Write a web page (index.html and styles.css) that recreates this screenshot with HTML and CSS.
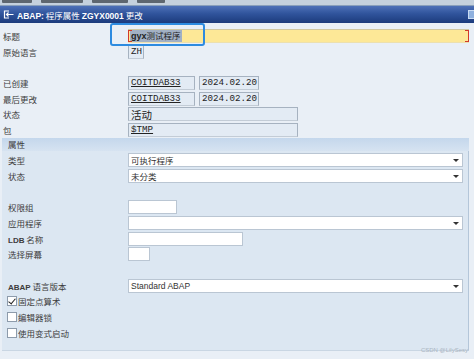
FILE: index.html
```html
<!DOCTYPE html>
<html lang="zh">
<head>
    <meta charset="UTF-8">
    <title>ABAP: 程序属性 ZGYX0001 更改</title>
    <link rel="stylesheet" href="styles.css">
</head>
<body>
<div class="topstrip">
    <i class="blob w1"></i><i class="blob w2"></i><i class="blob w3"></i><i class="blob w4"></i>
</div>
<div class="titlebar">
    <svg class="tb-icon" width="11" height="9" viewBox="0 0 11 9">
        <path d="M6 1H1.5V8H6" fill="none" stroke="#fff" stroke-width="1.2"/>
        <path d="M10.5 4.5H3.5M5.5 2.5L3.5 4.5L5.5 6.5" fill="none" stroke="#fff" stroke-width="1.2"/>
    </svg>
    <span class="tb-text"><b>ABAP:</b> 程序属性 <b>ZGYX0001</b> 更改</span>
    <i class="tb-btn"></i>
</div>

<div class="form">
    <div class="row">
        <span class="label">标题</span>
        <span class="field yellow"><em class="sel"><b>gyx</b>测试程序</em></span>
    </div>
    <div class="row">
        <span class="label">原始语言</span>
        <span class="field ro w15">ZH</span>
    </div>
    <div class="row"></div>
    <div class="row">
        <span class="label">已创建</span>
        <span class="field ro w67 link">COITDAB33</span>
        <span class="field ro w60 gap">2024.02.20</span>
    </div>
    <div class="row">
        <span class="label">最后更改</span>
        <span class="field ro w67 link">COITDAB33</span>
        <span class="field ro w60 gap">2024.02.20</span>
    </div>
    <div class="row">
        <span class="label">状态</span>
        <span class="field ro w170 cjk">活动</span>
    </div>
    <div class="row">
        <span class="label">包</span>
        <span class="field ro w170 link">$TMP</span>
    </div>

    <div class="group">
        <div class="group-head">属性</div>
        <div class="group-body">
            <div class="row">
                <span class="label">类型</span>
                <span class="field dd">可执行程序</span>
            </div>
            <div class="row">
                <span class="label">状态</span>
                <span class="field dd">未分类</span>
            </div>
            <div class="row"></div>
            <div class="row">
                <span class="label">权限组</span>
                <span class="field inp w49"></span>
            </div>
            <div class="row">
                <span class="label">应用程序</span>
                <span class="field dd"></span>
            </div>
            <div class="row">
                <span class="label"><b>LDB</b> 名称</span>
                <span class="field inp w115"></span>
            </div>
            <div class="row">
                <span class="label">选择屏幕</span>
                <span class="field inp w21"></span>
            </div>
            <div class="row"></div>
            <div class="row">
                <span class="label"><b>ABAP</b> 语言版本</span>
                <span class="field dd latin">Standard ABAP</span>
            </div>
            <div class="row check">
                <span class="box on"></span><span class="ctext">固定点算术</span>
            </div>
            <div class="row check">
                <span class="box"></span><span class="ctext">编辑器锁</span>
            </div>
            <div class="row check">
                <span class="box"></span><span class="ctext">使用变式启动</span>
            </div>
        </div>
    </div>
</div>

<div class="focus"></div>
<div class="mark">CSDN @LilySesy</div>
</body>
</html>
```

FILE: styles.css
```css
*{
    margin: 0;
    padding: 0;
    box-sizing: border-box;
}
body{
    width: 474px;
    height: 359px;
    overflow: hidden;
    position: relative;
    background: #e9eff6;
    color: #3c3c3c;
    font-family: "Noto Sans CJK SC", "Liberation Sans", sans-serif;
}
b{
    font-family: "Liberation Sans", sans-serif;
    font-weight: bold;
}

/* top menu strip, mostly cut off: only the bottoms of the words show */
.topstrip{
    height: 6px;
    display: flex;
    align-items: flex-start;
    gap: 9px;
    padding-left: 2px;
    background: #c5d1dd;
    border-bottom: 1px solid #8aa0bb;
}
.blob{
    height: 3px;
    background: #5e6770;
    border-radius: 0 0 1px 1px;
}
.blob.w1{ width: 30px; }
.blob.w2{ width: 42px; }
.blob.w3{ width: 36px; }
.blob.w4{ width: 28px; }

.titlebar{
    height: 17px;
    display: flex;
    align-items: center;
    padding-left: 3px;
    color: #fff;
    background: linear-gradient(#4e71b7, #30549c 45%, #1c3b7c);
}
.tb-icon{
    margin-right: 3px;
}
.tb-text{
    font-size: 8.5px;
    white-space: nowrap;
}
.tb-text b{
    font-size: 8.5px;
}
.tb-btn{
    margin-left: auto;
    width: 6px;
    height: 9px;
    background: #8fb1df;
    border: 1px solid #c9dbf2;
    border-right: none;
}

.form{
    padding-top: 5px;
}
.row{
    height: 15.7px;
    display: flex;
    align-items: center;
    padding-left: 3px;
}
.label{
    width: 125px;
    flex: none;
    font-size: 8.5px;
    white-space: nowrap;
}
.label b{
    font-size: 8px;
}

.field{
    height: 14px;
    flex: none;
    display: flex;
    align-items: center;
    padding-left: 2px;
    white-space: nowrap;
    overflow: hidden;
}
.ro{
    background: #e3ebf4;
    border: 1px solid #a6b2c0;
    border-bottom-color: #c3ccd6;
    font-family: "Liberation Mono", "Noto Sans CJK SC", monospace;
    font-size: 9.2px;
    color: #222;
}
.ro.cjk{
    font-family: "Noto Sans CJK SC", sans-serif;
    font-size: 10.5px;
}
.link{
    text-decoration: underline;
}
.gap{
    margin-left: 4px;
}
.w15{ width: 16px; }
.w67{ width: 67px; }
.w60{ width: 60px; }
.w170{ width: 170px; }
.w49{ width: 49px; }
.w115{ width: 115px; }
.w21{ width: 22px; }

.yellow{
    width: 341px;
    position: relative;
    background: #fde897;
    border-top: 1px solid #cfc7a2;
    border-bottom: 1px solid #ece0ae;
    padding-left: 2px;
    font-size: 8.5px;
}
.yellow::before,
.yellow::after{
    content: "";
    position: absolute;
    top: 0;
    bottom: 0;
    width: 3px;
    border: 1px solid #d13a2a;
}
.yellow::before{
    left: 0;
    border-right: none;
}
.yellow::after{
    right: 0;
    border-left: none;
}
.sel{
    font-style: normal;
    background: #a2b0c4;
    color: #1f1f1f;
    padding: 0 1px;
    line-height: 11px;
}
.sel b{
    font-size: 9px;
}

.group{
    margin: 0 5px 0 2px;
}
.group-head{
    height: 13px;
    padding-left: 6px;
    font-size: 8.5px;
    line-height: 13px;
    background: linear-gradient(#c4d7ec, #d6e3f1);
}
.group-body{
    padding: 1.5px 0 9px;
    background: #dce7f2;
    border-right: 1px solid #b4c6d9;
    border-bottom: 1px solid #c9d6e3;
}
.group-body .row{
    padding-left: 6px;
}
.group-body .label{
    width: 120px;
}

.dd{
    width: 335px;
    position: relative;
    background: #fff;
    border: 1px solid #bac6d3;
    font-size: 8.5px;
    color: #333;
}
.dd::after{
    content: "";
    position: absolute;
    right: 3px;
    top: 5px;
    border-left: 3px solid transparent;
    border-right: 3px solid transparent;
    border-top: 3px solid #333;
}
.dd.latin{
    font-family: "Liberation Sans", sans-serif;
    font-size: 8.5px;
}
.inp{
    background: #fff;
    border: 1px solid #bac6d3;
}

.group-body .check{
    padding-left: 5px;
}
.box{
    width: 10px;
    height: 10px;
    flex: none;
    background: #fff;
    border: 1px solid #8d9bab;
    position: relative;
}
.box.on::after{
    content: "";
    position: absolute;
    left: 2px;
    top: 0;
    width: 3px;
    height: 6px;
    border-right: 1.5px solid #222;
    border-bottom: 1.5px solid #222;
    transform: rotate(40deg);
}
.ctext{
    margin-left: 1px;
    font-size: 8.5px;
}

/* focus frame drawn over the title field */
.focus{
    position: absolute;
    left: 110px;
    top: 23px;
    width: 95px;
    height: 23px;
    border: 2px solid #2d8be0;
    border-radius: 3px;
}
.mark{
    position: absolute;
    right: 6px;
    top: 347px;
    font-family: "Liberation Sans", sans-serif;
    font-size: 6px;
    color: #a9b4bf;
}
```
